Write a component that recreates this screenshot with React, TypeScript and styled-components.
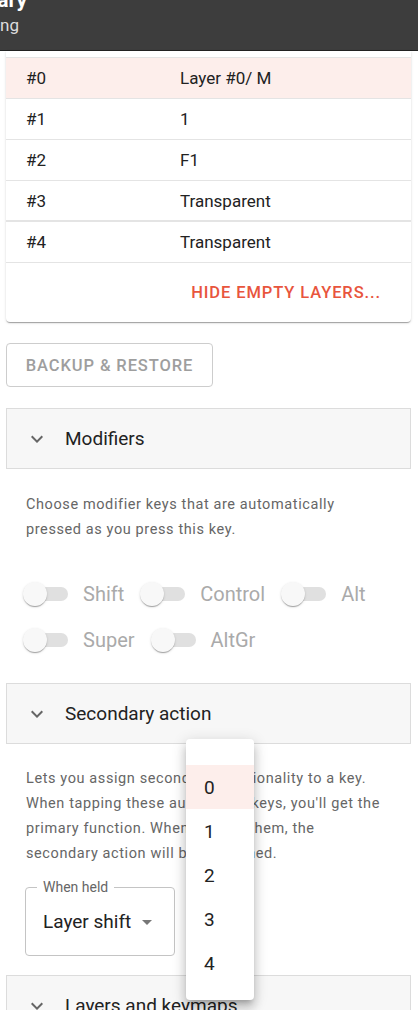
import React from "react";
import styled, { createGlobalStyle } from "styled-components";

const GlobalStyle = createGlobalStyle`
  * { box-sizing: border-box; }
  body {
    margin: 0;
    background: #fff;
    font-family: Roboto, "Noto Sans", "Liberation Sans", sans-serif;
    color: #222;
  }
`;

const Page = styled.div`
  position: relative;
  width: 418px;
  height: 1010px;
  overflow: hidden;
`;

const AppBar = styled.header`
  height: 51px;
  background: #3d3d3d;
  border-bottom: 1px solid #222;
  color: #fff;
  overflow: hidden;
`;

const AppTitle = styled.div`
  width: 200px;
  margin-left: -173px;
  margin-top: -12px;
  text-align: right;
  font-size: 21px;
  font-weight: 700;
  line-height: 24px;
`;

const AppSubtitle = styled.div`
  width: 200px;
  margin-left: -181px;
  margin-top: 3px;
  text-align: right;
  font-size: 17px;
  line-height: 20px;
  color: #ddd;
`;

const Card = styled.section`
  margin: 0 7px 0 6px;
  background: #fff;
  border-radius: 0 0 4px 4px;
  box-shadow: 0 2px 1px -1px rgba(0, 0, 0, 0.2), 0 1px 1px 0 rgba(0, 0, 0, 0.14),
    0 1px 3px 0 rgba(0, 0, 0, 0.12);
`;

const CardTop = styled.div`
  height: 7px;
  border-bottom: 1px solid #e4e4e4;
`;

const LayerRow = styled.div<{ $selected?: boolean; $thick?: boolean }>`
  display: flex;
  align-items: center;
  height: 41px;
  padding: 0 20px;
  border-bottom: ${(p) => (p.$thick ? 2 : 1)}px solid #e4e4e4;
  background: ${(p) => (p.$selected ? "#fdeeeb" : "#fff")};
  font-size: 17px;
  color: #222;
`;

const LayerId = styled.span`
  flex: none;
  width: 154px;
`;

const LayerName = styled.span`
  flex: 1;
  white-space: nowrap;
`;

const CardFooter = styled.div`
  display: flex;
  justify-content: flex-end;
  align-items: center;
  height: 59px;
  padding-right: 30px;
`;

const TextButton = styled.button`
  border: none;
  background: none;
  padding: 0;
  font-family: inherit;
  font-size: 16.5px;
  font-weight: 500;
  letter-spacing: 0.9px;
  text-transform: uppercase;
  color: #e8553d;
`;

const OutlinedButton = styled.button`
  display: block;
  margin: 21px 0 0 6px;
  width: 207px;
  height: 44px;
  border: 1px solid #cdcdcd;
  border-radius: 4px;
  background: #fff;
  font-family: inherit;
  font-size: 16.5px;
  font-weight: 500;
  letter-spacing: 0.9px;
  text-transform: uppercase;
  color: #9e9e9e;
`;

const AccordionHeader = styled.div<{ $top: number }>`
  display: flex;
  align-items: center;
  gap: 16px;
  margin: ${(p) => p.$top}px 7px 0 6px;
  height: 61px;
  padding-left: 18px;
  background: #f7f7f7;
  border: 1px solid #dcdcdc;
  font-size: 19px;
  color: #222;
  svg {
    flex: none;
  }
`;

const Description = styled.p<{ $top: number }>`
  margin: ${(p) => p.$top}px 34px 0 26px;
  font-size: 14.5px;
  line-height: 25px;
  letter-spacing: 0.6px;
  color: #666;
`;

const SwitchGroup = styled.div`
  display: flex;
  flex-wrap: wrap;
  column-gap: 16px;
  margin: 29px 7px 0 23px;
`;

const SwitchLabel = styled.label`
  display: flex;
  align-items: center;
  height: 46px;
  gap: 15px;
  font-size: 20px;
  color: #aaa;
`;

const SwitchBox = styled.span`
  position: relative;
  width: 45px;
  height: 24px;
  flex: none;
`;

const SwitchTrack = styled.span`
  position: absolute;
  left: 10px;
  top: 5px;
  width: 35px;
  height: 14px;
  border-radius: 7px;
  background: #e0e0e0;
`;

const SwitchThumb = styled.span`
  position: absolute;
  left: 0;
  top: 0;
  width: 24px;
  height: 24px;
  border-radius: 50%;
  background: #f8f8f8;
  box-shadow: 0 2px 1px -1px rgba(0, 0, 0, 0.2), 0 1px 1px 0 rgba(0, 0, 0, 0.14),
    0 1px 3px 0 rgba(0, 0, 0, 0.12);
`;

const SelectBox = styled.div`
  position: relative;
  display: flex;
  align-items: center;
  margin: 21px 0 0 25px;
  width: 150px;
  height: 69px;
  padding-left: 17px;
  border: 1px solid #c4c4c4;
  border-radius: 4px;
  font-size: 19px;
  color: #222;
  svg {
    margin-left: 4px;
  }
`;

const SelectLabel = styled.span`
  position: absolute;
  left: 11px;
  top: -10px;
  padding: 0 6px;
  background: #fff;
  font-size: 14px;
  line-height: 18px;
  color: #666;
`;

const Menu = styled.ul`
  position: absolute;
  left: 186px;
  top: 739px;
  width: 68px;
  margin: 0;
  padding: 26px 0 15px;
  list-style: none;
  background: #fff;
  border-radius: 4px;
  box-shadow: 0 5px 5px -3px rgba(0, 0, 0, 0.2), 0 8px 10px 1px rgba(0, 0, 0, 0.14),
    0 3px 14px 2px rgba(0, 0, 0, 0.12);
`;

const MenuItem = styled.li<{ $selected?: boolean }>`
  display: flex;
  align-items: center;
  height: 44px;
  padding-left: 18px;
  font-size: 19px;
  color: #222;
  background: ${(p) => (p.$selected ? "#fdeeeb" : "transparent")};
`;

const ExpandIcon = () => (
  <svg width="24" height="24" viewBox="0 0 24 24" fill="#666">
    <path d="M16.59 8.59L12 13.17 7.41 8.59 6 10l6 6 6-6z" />
  </svg>
);

const DropIcon = () => (
  <svg width="24" height="24" viewBox="0 0 24 24" fill="#777">
    <path d="M7 10l5 5 5-5z" />
  </svg>
);

const layers = [
  ["#0", "Layer #0/ M"],
  ["#1", "1"],
  ["#2", "F1"],
  ["#3", "Transparent"],
  ["#4", "Transparent"],
];

const modifiers = ["Shift", "Control", "Alt", "Super", "AltGr"];

const Toggle = ({ label }: { label: string }) => (
  <SwitchLabel>
    <SwitchBox>
      <SwitchTrack />
      <SwitchThumb />
    </SwitchBox>
    {label}
  </SwitchLabel>
);

export default function App() {
  return (
    <Page>
      <GlobalStyle />
      <AppBar>
        <AppTitle>Layout Library</AppTitle>
        <AppSubtitle>Editing</AppSubtitle>
      </AppBar>

      <Card>
        <CardTop />
        {layers.map(([id, name], i) => (
          <LayerRow key={id} $selected={i === 0} $thick={i === 3}>
            <LayerId>{id}</LayerId>
            <LayerName>{name}</LayerName>
          </LayerRow>
        ))}
        <CardFooter>
          <TextButton>Hide empty layers...</TextButton>
        </CardFooter>
      </Card>

      <OutlinedButton>Backup &amp; Restore</OutlinedButton>

      <AccordionHeader $top={21}>
        <ExpandIcon />
        Modifiers
      </AccordionHeader>
      <Description $top={23}>
        Choose modifier keys that are automatically pressed as you press this key.
      </Description>
      <SwitchGroup>
        {modifiers.map((m) => (
          <Toggle key={m} label={m} />
        ))}
      </SwitchGroup>

      <AccordionHeader $top={20}>
        <ExpandIcon />
        Secondary action
      </AccordionHeader>
      <Description $top={22}>
        Lets you assign secondary functionality to a key. When tapping these augmented
        keys, you'll get the primary function. When holding them, the secondary action
        will be performed.
      </Description>
      <SelectBox>
        <SelectLabel>When held</SelectLabel>
        Layer shift
        <DropIcon />
      </SelectBox>

      <AccordionHeader $top={19}>
        <ExpandIcon />
        Layers and keymaps
      </AccordionHeader>

      <Menu>
        {[0, 1, 2, 3, 4].map((n) => (
          <MenuItem key={n} $selected={n === 0}>
            {n}
          </MenuItem>
        ))}
      </Menu>
    </Page>
  );
}
